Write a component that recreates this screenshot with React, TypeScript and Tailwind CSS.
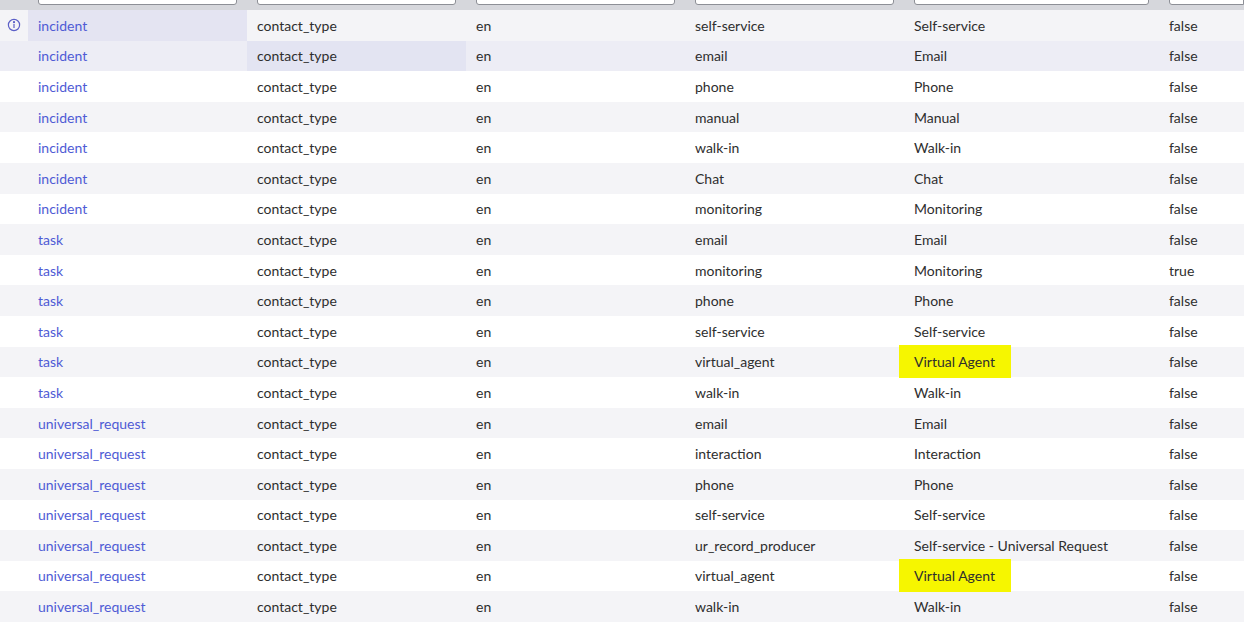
import React from "react";

const rows: [string, string, string, string][] = [
  ["incident", "self-service", "Self-service", "false"],
  ["incident", "email", "Email", "false"],
  ["incident", "phone", "Phone", "false"],
  ["incident", "manual", "Manual", "false"],
  ["incident", "walk-in", "Walk-in", "false"],
  ["incident", "Chat", "Chat", "false"],
  ["incident", "monitoring", "Monitoring", "false"],
  ["task", "email", "Email", "false"],
  ["task", "monitoring", "Monitoring", "true"],
  ["task", "phone", "Phone", "false"],
  ["task", "self-service", "Self-service", "false"],
  ["task", "virtual_agent", "Virtual Agent", "false"],
  ["task", "walk-in", "Walk-in", "false"],
  ["universal_request", "email", "Email", "false"],
  ["universal_request", "interaction", "Interaction", "false"],
  ["universal_request", "phone", "Phone", "false"],
  ["universal_request", "self-service", "Self-service", "false"],
  ["universal_request", "ur_record_producer", "Self-service - Universal Request", "false"],
  ["universal_request", "virtual_agent", "Virtual Agent", "false"],
  ["universal_request", "walk-in", "Walk-in", "false"],
];

export default function App() {
  return (
    <div className="w-[1244px] h-[622px] overflow-hidden bg-white text-[14px] text-[#2e2e2e]" style={{ fontFamily: "Lato, 'Open Sans', sans-serif" }}>
      <div className="h-[10px] bg-[#d6d7dc] flex">
        <div className="w-[28px]" />
        {[219, 219, 219, 219, 255].map((w, i) => (
          <div key={i} style={{ width: w }} className="pl-[10px] pr-[10px]">
            <div className="h-[6px] -mt-[1px] bg-white border border-[#8d8f96] rounded-b-[3px]" />
          </div>
        ))}
        <div className="flex-1 pl-[10px]">
          <div className="h-[6px] -mt-[1px] bg-white border border-[#8d8f96] rounded-bl-[3px]" />
        </div>
      </div>
      {rows.map((r, i) => {
        const rowBg = i === 1 ? "bg-[#ededf5]" : i === 0 || i % 2 === 1 ? "bg-[#f4f4f7]" : "bg-white";
        return (
          <div key={i} className={`flex items-center h-[30.6px] ${rowBg}`}>
            <div className="w-[28px] h-full flex items-center justify-center">
              {i === 0 && (
                <svg width="14" height="14" viewBox="0 0 14 14" fill="none" stroke="#5b5fc7" strokeWidth="1.2">
                  <circle cx="7" cy="7" r="5.6" />
                  <line x1="7" y1="6" x2="7" y2="10" />
                  <circle cx="7" cy="4.2" r="0.5" fill="#5b5fc7" />
                </svg>
              )}
            </div>
            <div className={`w-[219px] h-full flex items-center pl-[10px] text-[#4f5bd5] ${i === 0 ? "bg-[#e4e4f2]" : ""}`}>{r[0]}</div>
            <div className={`w-[219px] h-full flex items-center pl-[10px] ${i === 1 ? "bg-[#e3e4f2]" : ""}`}>contact_type</div>
            <div className="w-[219px] h-full flex items-center pl-[10px]">en</div>
            <div className="w-[219px] h-full flex items-center pl-[10px]">{r[1]}</div>
            <div className="w-[255px] h-full flex items-center pl-[10px]">
              {r[2] === "Virtual Agent" ? (
                <span className="bg-[#f6f600] pl-[15px] pr-[16px] -ml-[15px] py-[6px]">{r[2]}</span>
              ) : (
                r[2]
              )}
            </div>
            <div className="flex-1 h-full flex items-center pl-[10px]">{r[3]}</div>
          </div>
        );
      })}
    </div>
  );
}
